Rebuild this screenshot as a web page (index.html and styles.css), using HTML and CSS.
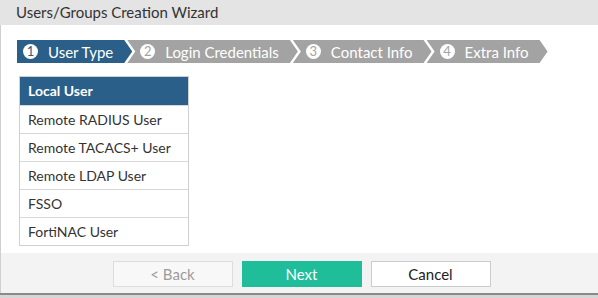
FILE: index.html
```html
<!DOCTYPE html>
<html lang="en">
<head>
    <meta charset="UTF-8">
    <title>Users/Groups Creation Wizard</title>
    <link rel="stylesheet" href="styles.css">
</head>
<body>
    <div class="dialog">
        <div class="dialog-title">Users/Groups Creation Wizard</div>
        <div class="dialog-body">
            <div class="steps">
                <div class="step step-first active"><span class="num">1</span>User Type</div>
                <div class="step"><span class="num">2</span>Login Credentials</div>
                <div class="step"><span class="num">3</span>Contact Info</div>
                <div class="step"><span class="num">4</span>Extra Info</div>
            </div>
            <ul class="user-types">
                <li class="selected">Local User</li>
                <li>Remote RADIUS User</li>
                <li>Remote TACACS+ User</li>
                <li>Remote LDAP User</li>
                <li>FSSO</li>
                <li>FortiNAC User</li>
            </ul>
        </div>
        <div class="dialog-footer">
            <button type="button" class="btn btn-disabled" disabled>&lt; Back</button>
            <button type="button" class="btn btn-primary">Next</button>
            <button type="button" class="btn">Cancel</button>
        </div>
    </div>
</body>
</html>
```

FILE: styles.css
```css
html, body {
    margin: 0;
    padding: 0;
    height: 100%;
}
body {
    font-family: Lato, "Open Sans", Arial, sans-serif;
    font-size: 14px;
    color: #333;
    background-color: #d6d6d6;
}
.dialog {
    width: 598px;
    height: 293px;
    display: flex;
    flex-direction: column;
    background: white;
    border-bottom: 2px solid #8a8a8a;
}
.dialog-title {
    height: 25px;
    line-height: 24px;
    padding-left: 16px;
    font-size: 15px;
    background-color: #e4e4e4;
    color: #333;
}
.dialog-body {
    flex: 1;
    padding: 15px 0 0 16px;
    border-left: 1px solid #cfcfcf;
}
.steps {
    display: flex;
    height: 23px;
}
.step {
    display: flex;
    align-items: center;
    height: 23px;
    padding: 0 19px 0 13px;
    margin-left: -5px;
    background-color: #a3a3a3;
    color: white;
    font-size: 15px;
    clip-path: polygon(0 0, calc(100% - 8px) 0, 100% 50%, calc(100% - 8px) 100%, 0 100%, 8px 50%);
}
.step-first {
    margin-left: 0;
    padding-left: 6px;
    clip-path: polygon(0 0, calc(100% - 8px) 0, 100% 50%, calc(100% - 8px) 100%, 0 100%);
}
.step.active {
    background-color: #2a5f89;
}
.num {
    width: 15px;
    height: 15px;
    margin-right: 10px;
    border-radius: 50%;
    background: white;
    color: #a3a3a3;
    font-size: 13px;
    line-height: 15px;
    text-align: center;
}
.active .num {
    color: #2a5f89;
}
.user-types {
    list-style: none;
    margin: 13px 0 0 2px;
    padding: 0;
    width: 170px;
    border: 1px solid #d0d0d0;
    box-sizing: border-box;
}
.user-types li {
    height: 28px;
    line-height: 27px;
    padding-left: 8px;
    border-top: 1px solid #d8d8d8;
    box-sizing: border-box;
}
.user-types li:first-child {
    border-top: none;
}
.user-types li.selected {
    background-color: #2a5f89;
    color: white;
    font-weight: bold;
}
.dialog-footer {
    height: 40px;
    padding-top: 8px;
    box-sizing: border-box;
    display: flex;
    justify-content: center;
    gap: 9px;
    padding-left: 4px;
    background-color: #f3f3f3;
    border-left: 1px solid #cfcfcf;
}
.btn {
    width: 120px;
    height: 26px;
    font-family: Lato, "Open Sans", Arial, sans-serif;
    font-size: 15px;
    color: #222;
    background: white;
    border: 1px solid #cccccc;
    cursor: pointer;
}
.btn-primary {
    background-color: #20bd9b;
    border-color: #20bd9b;
    color: white;
}
.btn-disabled {
    background-color: #f8f8f8;
    border-color: #dddddd;
    color: #9c9c9c;
    cursor: default;
}
```
